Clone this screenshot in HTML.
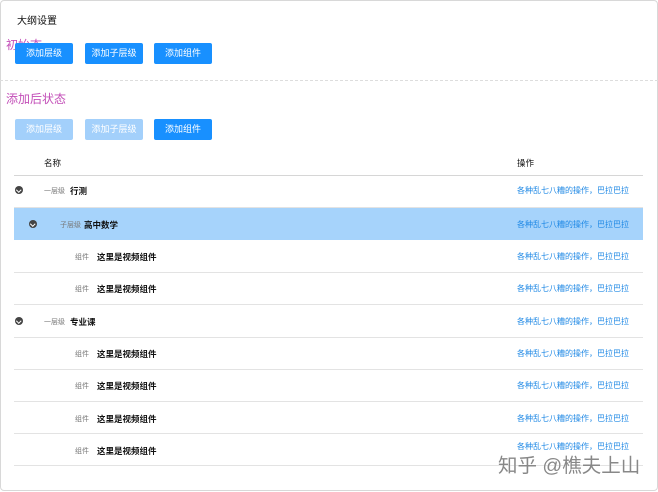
<!DOCTYPE html>
<html><head><meta charset="utf-8"><style>
body{margin:0;width:658px;height:492px;overflow:hidden;background:#fff;font-family:"Liberation Sans","Noto Sans CJK SC",sans-serif;position:relative}
.frame{position:absolute;left:0;top:0;width:656px;height:489px;border:1px solid #d8d8d8;border-radius:4px}
.a{position:absolute;white-space:nowrap;line-height:12px}
.btn{position:absolute;height:21px;line-height:21px;text-align:center;background:#1890ff;color:#fff;font-size:9px;border-radius:2px}
.dis{background:#a3d0fb}
.line{position:absolute;left:14px;width:629px;height:1px;background:#e3e3e3}
.op{position:absolute;left:517px;font-size:8px;line-height:12px;color:#1e88e5;white-space:nowrap}
.ic{position:absolute;width:8px;height:8px;border-radius:50%;background:#444}
.ic:after{content:"";position:absolute;left:2px;top:1.5px;width:2.5px;height:2.5px;border-right:1.2px solid #fff;border-bottom:1.2px solid #fff;transform:rotate(45deg)}
.sm{font-size:7px;color:#777;margin-top:1px}
.nm{font-size:8.5px;color:#111;font-weight:bold}
</style></head><body>
<div class="frame"></div>
<div class="a" style="left:17px;top:16px;font-size:10px;color:#111">大纲设置</div>
<div class="a" style="left:6px;top:39px;font-size:12px;color:#c34fb8">初始态</div>
<div class="btn" style="left:15px;top:43px;width:58px">添加层级</div>
<div class="btn" style="left:85px;top:43px;width:58px">添加子层级</div>
<div class="btn" style="left:154px;top:43px;width:58px">添加组件</div>
<div class="a" style="left:0;top:80px;width:658px;border-top:1px dashed #ddd"></div>
<div class="a" style="left:6px;top:93px;font-size:12px;color:#c34fb8">添加后状态</div>
<div class="btn dis" style="left:15px;top:119px;width:58px">添加层级</div>
<div class="btn dis" style="left:85px;top:119px;width:58px">添加子层级</div>
<div class="btn" style="left:154px;top:119px;width:58px">添加组件</div>
<div class="a" style="left:44px;top:157px;font-size:8.5px;color:#111">名称</div>
<div class="a" style="left:517px;top:157px;font-size:8.5px;color:#111">操作</div>
<div class="line" style="top:175px;background:#d6d6d6"></div>
<div class="a" style="left:14px;top:208px;width:629px;height:32px;background:#a6d3fb"></div>

<div class="ic" style="left:15px;top:186px"></div><div class="a sm" style="left:44px;top:185px">一层级</div><div class="a nm" style="left:70px;top:185px">行测</div><div class="op" style="top:185px">各种乱七八糟的操作，巴拉巴拉</div>
<div class="line" style="top:207px"></div>
<div class="ic" style="left:29px;top:220px"></div><div class="a sm" style="left:60px;top:219px">子层级</div><div class="a nm" style="left:84px;top:219px">高中数学</div><div class="op" style="top:219px">各种乱七八糟的操作，巴拉巴拉</div>
<div class="a sm" style="left:75px;top:251px">组件</div><div class="a nm" style="left:97px;top:251px">这里是视频组件</div><div class="op" style="top:251px">各种乱七八糟的操作，巴拉巴拉</div>
<div class="line" style="top:272px"></div>
<div class="a sm" style="left:75px;top:283px">组件</div><div class="a nm" style="left:97px;top:283px">这里是视频组件</div><div class="op" style="top:283px">各种乱七八糟的操作，巴拉巴拉</div>
<div class="line" style="top:304px"></div>
<div class="ic" style="left:15px;top:317px"></div><div class="a sm" style="left:44px;top:316px">一层级</div><div class="a nm" style="left:70px;top:316px">专业课</div><div class="op" style="top:316px">各种乱七八糟的操作，巴拉巴拉</div>
<div class="line" style="top:337px"></div>
<div class="a sm" style="left:75px;top:348px">组件</div><div class="a nm" style="left:97px;top:348px">这里是视频组件</div><div class="op" style="top:348px">各种乱七八糟的操作，巴拉巴拉</div>
<div class="line" style="top:369px"></div>
<div class="a sm" style="left:75px;top:380px">组件</div><div class="a nm" style="left:97px;top:380px">这里是视频组件</div><div class="op" style="top:380px">各种乱七八糟的操作，巴拉巴拉</div>
<div class="line" style="top:401px"></div>
<div class="a sm" style="left:75px;top:413px">组件</div><div class="a nm" style="left:97px;top:413px">这里是视频组件</div><div class="op" style="top:413px">各种乱七八糟的操作，巴拉巴拉</div>
<div class="line" style="top:433px"></div>
<div class="a sm" style="left:75px;top:445px">组件</div><div class="a nm" style="left:97px;top:445px">这里是视频组件</div><div class="op" style="top:441px">各种乱七八糟的操作，巴拉巴拉</div>
<div class="line" style="top:465px"></div>
<div class="a" style="left:498px;top:455px;line-height:22px;font-size:19.5px;color:#888;text-shadow:0 0 1px #fff">知乎 @樵夫上山</div>
</body></html>
